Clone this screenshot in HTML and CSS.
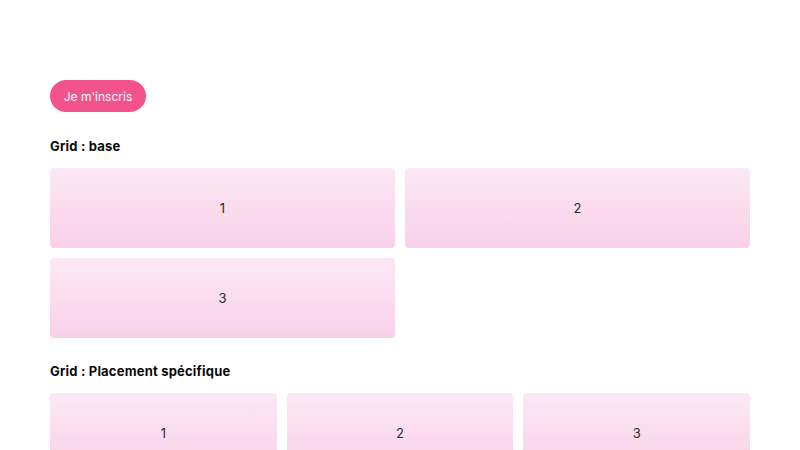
FILE: index.html
```html
<!DOCTYPE html>
<html lang="fr">
<head>
<meta charset="utf-8">
<link rel="stylesheet" href="styles.css">
</head>
<body>
<main class="page">
  <button class="btn">Je m'inscris</button>
  <h2 class="title">Grid : base</h2>
  <div class="grid grid-base">
    <div class="cell">1</div>
    <div class="cell">2</div>
    <div class="cell">3</div>
  </div>
  <h2 class="title title-next">Grid : Placement spécifique</h2>
  <div class="grid grid-three">
    <div class="cell">1</div>
    <div class="cell">2</div>
    <div class="cell">3</div>
  </div>
</main>
</body>
</html>
```
FILE: styles.css
```css
html, body { margin: 0; padding: 0; background: #fff; }
body { font-family: "Inter", "DejaVu Sans", sans-serif; color: #111; }
.page { padding: 80px 50px 40px; }
.btn {
  display: block;
  width: 96px;
  height: 32px;
  padding: 0;
  border: none;
  border-radius: 16px;
  background: #f2538c;
  color: #fff;
  font-family: inherit;
  font-size: 12px;
  white-space: nowrap;
}
.title {
  margin: 26px 0 14px;
  font-size: 13px;
  line-height: 16px;
  font-weight: 700;
  letter-spacing: 0.2px;
  color: #0a0a0a;
}
.title-next { margin-top: 25px; }
.grid { display: grid; gap: 10px; }
.grid-base { grid-template-columns: 1fr 1fr; }
.grid-three { grid-template-columns: 1fr 1fr 1fr; }
.cell {
  height: 80px;
  display: flex;
  align-items: center;
  justify-content: center;
  border-radius: 4px;
  background: linear-gradient(to bottom, #fbe8f4, #f9d1e9);
  font-size: 13px;
  color: #2a2a2a;
}
```
